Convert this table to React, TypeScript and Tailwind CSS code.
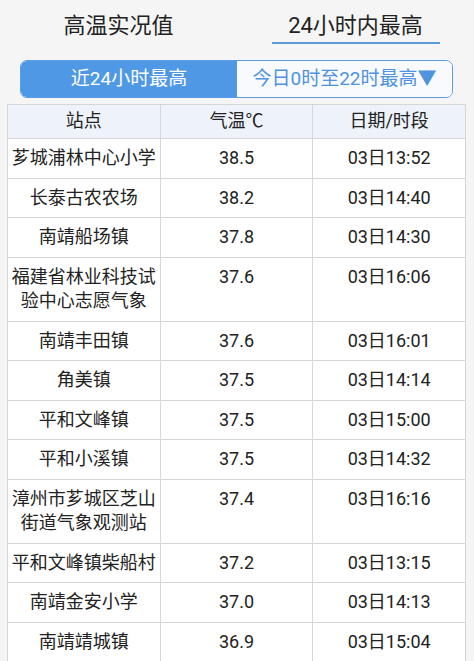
const rows: [string, string, string][] = [
  ['芗城浦林中心小学', '38.5', '03日13:52'],
  ['长泰古农农场', '38.2', '03日14:40'],
  ['南靖船场镇', '37.8', '03日14:30'],
  ['福建省林业科技试验中心志愿气象', '37.6', '03日16:06'],
  ['南靖丰田镇', '37.6', '03日16:01'],
  ['角美镇', '37.5', '03日14:14'],
  ['平和文峰镇', '37.5', '03日15:00'],
  ['平和小溪镇', '37.5', '03日14:32'],
  ['漳州市芗城区芝山街道气象观测站', '37.4', '03日16:16'],
  ['平和文峰镇柴船村', '37.2', '03日13:15'],
  ['南靖金安小学', '37.0', '03日14:13'],
  ['南靖靖城镇', '36.9', '03日15:04'],
];

export default function App() {
  return (
    <div className="w-[474px] h-[661px] overflow-hidden bg-[#f5f5f5] text-[#222] font-['Roboto','Noto_Sans_CJK_SC',sans-serif]">
      {/* 上部タブ */}
      <div className="flex h-[52px]">
        <div className="flex-1 flex justify-center">
          <div className="pt-[11px] text-[22px] leading-[30px]">高温实况值</div>
        </div>
        <div className="flex-1 flex justify-center">
          <div className="pt-[11px] w-[168px] text-center text-[22px] leading-[30px] h-[44px] border-b-2 border-[#5b9bd8]">
            24小时内最高
          </div>
        </div>
      </div>

      {/* 切替 */}
      <div className="mt-[8px] ml-[20px] w-[433px] h-[38px] flex rounded-[7px] border border-[#5b9ee6] overflow-hidden text-[19px]">
        <div className="w-[216px] bg-[#4f98e6] text-white flex items-center justify-center">近24小时最高</div>
        <div className="flex-1 bg-[#f8fafd] text-[#4f92de] flex items-center justify-center">今日0时至22时最高▼</div>
      </div>

      {/* 一覧 */}
      <table className="mt-[6px] ml-[7px] w-[459px] table-fixed border-collapse bg-white text-[18px] leading-[24.5px]">
        <thead>
          <tr className="bg-[#eef3fb]">
            <th className="border border-[#d6d6d6] font-normal py-[4px] h-[34px]">站点</th>
            <th className="border border-[#d6d6d6] font-normal py-[4px]">气温℃</th>
            <th className="border border-[#d6d6d6] font-normal py-[4px]">日期/时段</th>
          </tr>
        </thead>
        <tbody>
          {rows.map((r) => (
            <tr key={r[0]}>
              <td className="border border-[#d6d6d6] px-[2px] py-[7px] text-center align-top">{r[0]}</td>
              <td className="border border-[#d6d6d6] py-[7px] text-center align-top">{r[1]}</td>
              <td className="border border-[#d6d6d6] py-[7px] text-center align-top">{r[2]}</td>
            </tr>
          ))}
        </tbody>
      </table>
    </div>
  );
}
